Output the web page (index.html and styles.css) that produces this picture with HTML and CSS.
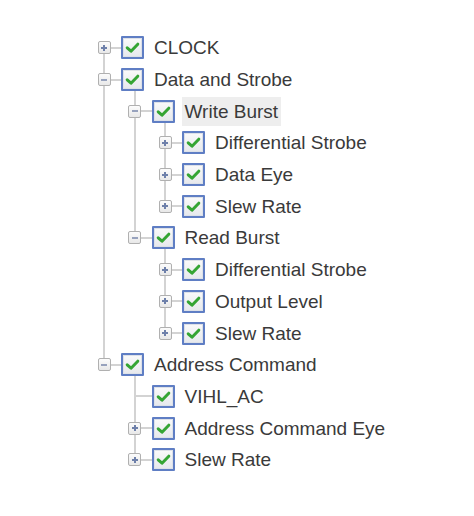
FILE: index.html
```html
<!DOCTYPE html>
<html>
<head>
<meta charset="utf-8">
<link rel="stylesheet" href="styles.css">
</head>
<body>
<svg class="defs" width="0" height="0">
  <defs>
    <symbol id="chk" viewBox="0 0 19 19">
      <path d="M4.2 9.8 L8 13.2 L14.8 6.2" fill="none" stroke="#35a534" stroke-width="3" stroke-linecap="round" stroke-linejoin="round"/>
    </symbol>
  </defs>
</svg>
<div class="wrap">
<ul class="tree root">
  <li class="node first">
    <div class="row"><span class="toggle"><span class="exp plus"></span></span><span class="cb"><svg width="19" height="19"><use href="#chk"/></svg></span><span class="label">CLOCK</span></div>
  </li>
  <li class="node">
    <div class="row open"><span class="toggle"><span class="exp minus"></span></span><span class="cb"><svg width="19" height="19"><use href="#chk"/></svg></span><span class="label">Data and Strobe</span></div>
    <ul class="tree">
      <li class="node">
        <div class="row open"><span class="toggle"><span class="exp minus"></span></span><span class="cb"><svg width="19" height="19"><use href="#chk"/></svg></span><span class="label selected">Write Burst</span></div>
        <ul class="tree">
          <li class="node"><div class="row"><span class="toggle"><span class="exp plus"></span></span><span class="cb"><svg width="19" height="19"><use href="#chk"/></svg></span><span class="label">Differential Strobe</span></div></li>
          <li class="node"><div class="row"><span class="toggle"><span class="exp plus"></span></span><span class="cb"><svg width="19" height="19"><use href="#chk"/></svg></span><span class="label">Data Eye</span></div></li>
          <li class="node last"><div class="row"><span class="toggle"><span class="exp plus"></span></span><span class="cb"><svg width="19" height="19"><use href="#chk"/></svg></span><span class="label">Slew Rate</span></div></li>
        </ul>
      </li>
      <li class="node last">
        <div class="row open"><span class="toggle"><span class="exp minus"></span></span><span class="cb"><svg width="19" height="19"><use href="#chk"/></svg></span><span class="label">Read Burst</span></div>
        <ul class="tree">
          <li class="node"><div class="row"><span class="toggle"><span class="exp plus"></span></span><span class="cb"><svg width="19" height="19"><use href="#chk"/></svg></span><span class="label">Differential Strobe</span></div></li>
          <li class="node"><div class="row"><span class="toggle"><span class="exp plus"></span></span><span class="cb"><svg width="19" height="19"><use href="#chk"/></svg></span><span class="label">Output Level</span></div></li>
          <li class="node last"><div class="row"><span class="toggle"><span class="exp plus"></span></span><span class="cb"><svg width="19" height="19"><use href="#chk"/></svg></span><span class="label">Slew Rate</span></div></li>
        </ul>
      </li>
    </ul>
  </li>
  <li class="node last">
    <div class="row open"><span class="toggle"><span class="exp minus"></span></span><span class="cb"><svg width="19" height="19"><use href="#chk"/></svg></span><span class="label">Address Command</span></div>
    <ul class="tree">
      <li class="node"><div class="row"><span class="toggle"></span><span class="cb"><svg width="19" height="19"><use href="#chk"/></svg></span><span class="label">VIHL_AC</span></div></li>
      <li class="node"><div class="row"><span class="toggle"><span class="exp plus"></span></span><span class="cb"><svg width="19" height="19"><use href="#chk"/></svg></span><span class="label">Address Command Eye</span></div></li>
      <li class="node last"><div class="row"><span class="toggle"><span class="exp plus"></span></span><span class="cb"><svg width="19" height="19"><use href="#chk"/></svg></span><span class="label">Slew Rate</span></div></li>
    </ul>
  </li>
</ul>
</div>
</body>
</html>
```

FILE: styles.css
```css
html, body {
  margin: 0;
  padding: 0;
  background: #ffffff;
}

.defs {
  display: block;
  width: 0;
  height: 0;
  overflow: hidden;
}

.wrap {
  padding: 32px 0 0 94px;
}

.tree {
  list-style: none;
  margin: 0;
  padding: 0;
}

.tree .tree {
  margin-left: 30.5px;
}

.node {
  background: linear-gradient(#d3d3d3, #d3d3d3) 9px 0 / 2px 100% no-repeat;
}

.node.last {
  background-size: 2px 16px;
}

.root > .node.first {
  background-position: 9px 16px;
}

.row {
  display: flex;
  align-items: center;
  height: 31.7px;
}

.row.open {
  background: linear-gradient(#d3d3d3, #d3d3d3) 39.5px 100% / 2px 50% no-repeat;
}

.toggle {
  display: flex;
  align-items: center;
  width: 27px;
  height: 100%;
  flex: none;
  background: linear-gradient(#d3d3d3, #d3d3d3) 9px 50% / 18px 2px no-repeat;
}

.exp {
  box-sizing: border-box;
  width: 13px;
  height: 13px;
  margin-left: 3.5px;
  border: 1px solid #b0b0b0;
  border-radius: 2px;
  background: linear-gradient(#fcfcfc, #e8e8e8);
  position: relative;
}

.exp::before {
  content: "";
  position: absolute;
  left: 2.5px;
  top: 4.5px;
  width: 6px;
  height: 2px;
  background: #6e80aa;
}

.exp.plus::after {
  content: "";
  position: absolute;
  left: 4.5px;
  top: 2.5px;
  width: 2px;
  height: 6px;
  background: #6e80aa;
}

.exp.minus::before {
  background: #97a2bd;
}

.cb {
  box-sizing: border-box;
  width: 23px;
  height: 23px;
  flex: none;
  border: 2px solid #5f7ec4;
  border-radius: 1px;
  background: linear-gradient(#fafafa, #e6e8ec);
  box-shadow: inset 0 0 0 1px #dde1e8;
  display: flex;
  align-items: center;
  justify-content: center;
}

.cb svg {
  display: block;
}

.label {
  margin-left: 7px;
  padding: 0 3px;
  line-height: 29px;
  font-family: "Liberation Sans", Arial, sans-serif;
  font-size: 19px;
  color: #3a3a3a;
  white-space: nowrap;
}

.label.selected {
  background: #eeeeee;
}
```
